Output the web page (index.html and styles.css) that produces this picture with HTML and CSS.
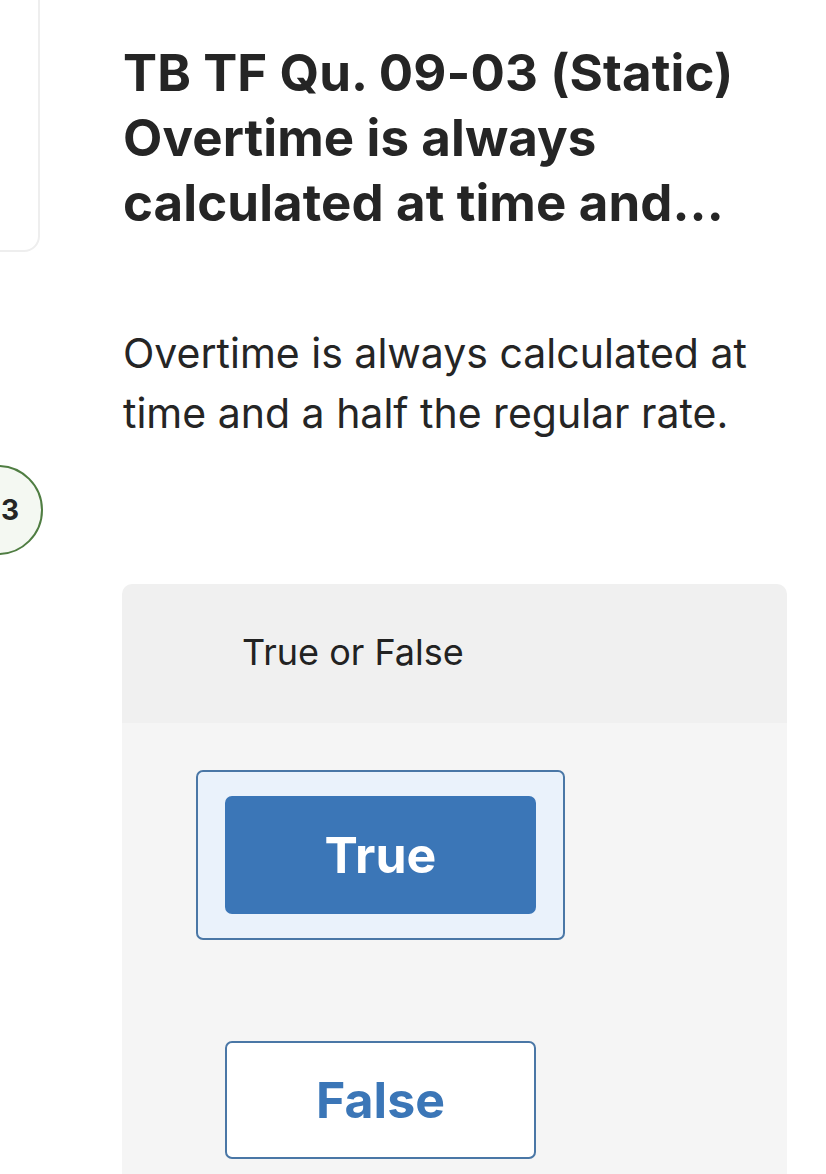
FILE: index.html
```html
<!DOCTYPE html>
<html lang="en">
<head>
<meta charset="utf-8">
<title>TB TF Qu. 09-03 (Static)</title>
<link rel="stylesheet" href="styles.css">
</head>
<body>
<div class="page">
  <aside class="side">
    <div class="side-card"></div>
    <div class="q-badge"><span class="q-num">3</span></div>
  </aside>
  <main class="main">
    <h1 class="title">TB TF Qu. 09-03 (Static) Overtime is always calculated at time and...</h1>
    <p class="prompt">Overtime is always calculated at time and a half the regular rate.</p>
    <section class="panel">
      <div class="panel-head">True or False</div>
      <div class="panel-body">
        <div class="option selected"><button class="choice">True</button></div>
        <div class="option"><button class="choice">False</button></div>
      </div>
    </section>
  </main>
</div>
</body>
</html>
```

FILE: styles.css
```css
html, body {
  margin: 0;
  padding: 0;
  background: #ffffff;
  overflow: hidden;
}
body {
  font-family: "Inter", "Lato", sans-serif;
  font-variant-ligatures: none;
  color: #252525;
}
.page {
  display: grid;
  grid-template-columns: 122px 665px;
  height: 1174px;
}
.side {
  display: flex;
  flex-direction: column;
}
.side-card {
  width: 80px;
  height: 272px;
  margin-top: -20px;
  margin-left: -40px;
  border: 2px solid #eeeeee;
  border-radius: 16px;
  box-sizing: border-box;
}
.q-badge {
  width: 90px;
  height: 90px;
  margin-top: 213px;
  margin-left: -47px;
  border: 2px solid #4f7d42;
  border-radius: 45px;
  background: #f4f8f2;
  box-sizing: border-box;
  display: flex;
  align-items: center;
  justify-content: flex-end;
  padding-right: 22px;
}
.q-num {
  font-weight: 700;
  font-size: 28px;
  color: #252525;
}
.main {
  display: flex;
  flex-direction: column;
}
.title {
  margin: 40px 0 0 1px;
  font-size: 51px;
  line-height: 65px;
  font-weight: 700;
  letter-spacing: 0.1px;
  padding-right: 20px;
}
.prompt {
  margin: 88px 0 0 1px;
  font-size: 41px;
  line-height: 60px;
  font-weight: 400;
}
.panel {
  margin-top: 141px;
  border-radius: 10px 10px 0 0;
  overflow: hidden;
  flex: 1;
  display: flex;
  flex-direction: column;
}
.panel-head {
  background: #f0f0f0;
  height: 139px;
  box-sizing: border-box;
  padding: 46px 0 0 120px;
  font-size: 36px;
  line-height: 44px;
  font-weight: 400;
  color: #222222;
}
.panel-body {
  background: #f5f5f5;
  flex: 1;
  padding: 47px 0 0 74px;
  display: flex;
  flex-direction: column;
  gap: 75px;
}
.option {
  width: 369px;
  height: 170px;
  box-sizing: border-box;
  border: 2px solid transparent;
  border-radius: 7px;
  display: flex;
  align-items: center;
  justify-content: center;
}
.option.selected {
  border-color: #4a77a6;
  background: #eaf2fb;
}
.choice {
  width: 311px;
  height: 118px;
  box-sizing: border-box;
  border: 2px solid #4a77a6;
  border-radius: 7px;
  background: #ffffff;
  color: #3b76b7;
  font-family: "Inter", "Lato", sans-serif;
  font-size: 50px;
  font-weight: 700;
  padding: 0;
}
.option.selected .choice {
  background: #3b76b7;
  border-color: #3b76b7;
  color: #ffffff;
}
```
